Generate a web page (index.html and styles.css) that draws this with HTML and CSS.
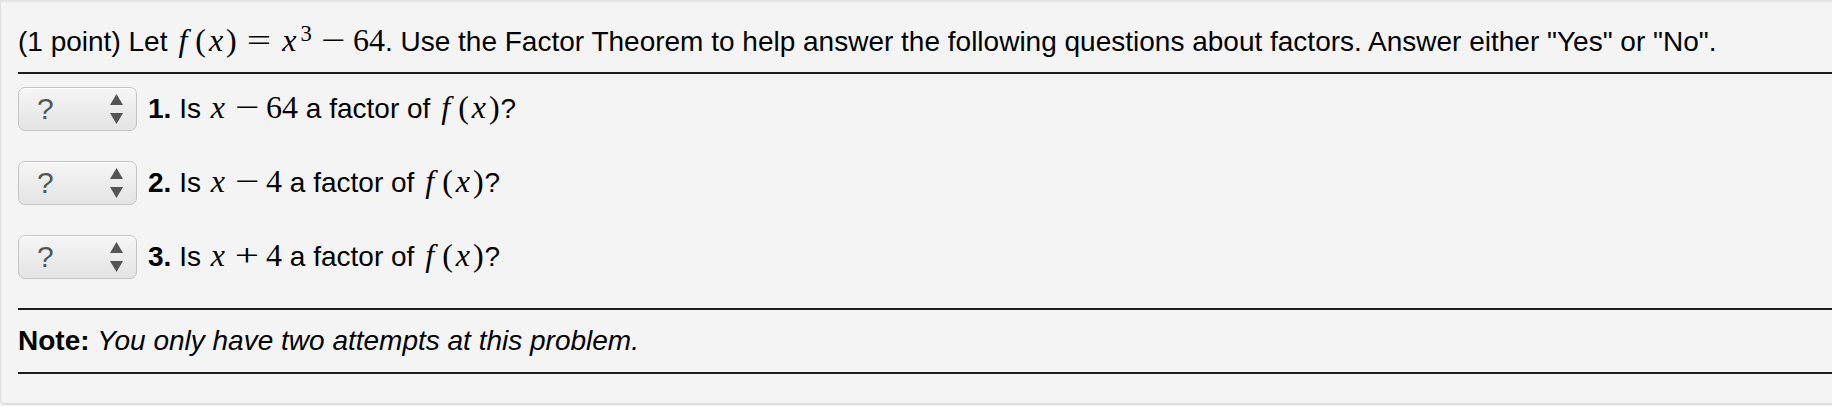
FILE: index.html
```html
<!DOCTYPE html>
<html>
<head>
<meta charset="utf-8">
<link rel="stylesheet" href="styles.css">
</head>
<body>
<div class="problem">
  <p class="intro">(1 point) Let <span class="m"><span class="mf">f</span><span class="mpar">(</span><span class="mx">x</span><span class="mpar">)</span><span class="rel"><span class="glyph">=</span></span><span class="mx">x</span><span class="sup">3</span><span class="bin"><span class="glyph">−</span></span>64</span>. Use the Factor Theorem to help answer the following questions about factors. Answer either "Yes" or "No".</p>
  <div class="rule"></div>
  <div class="questions">
    <div class="q">
      <div class="select"><span class="val">?</span><svg class="arrows" width="13" height="30" viewBox="0 0 13 30"><polygon points="6.5,0 13,11 0,11"/><polygon points="0,19 13,19 6.5,30"/></svg></div>
      <span class="qtext"><b>1.</b> Is <span class="m"><span class="mx">x</span><span class="bin"><span class="glyph">−</span></span>64</span> a factor of <span class="m"><span class="mf">f</span><span class="mpar">(</span><span class="mx">x</span><span class="mpar">)</span></span>?</span>
    </div>
    <div class="q">
      <div class="select"><span class="val">?</span><svg class="arrows" width="13" height="30" viewBox="0 0 13 30"><polygon points="6.5,0 13,11 0,11"/><polygon points="0,19 13,19 6.5,30"/></svg></div>
      <span class="qtext"><b>2.</b> Is <span class="m"><span class="mx">x</span><span class="bin"><span class="glyph">−</span></span>4</span> a factor of <span class="m"><span class="mf">f</span><span class="mpar">(</span><span class="mx">x</span><span class="mpar">)</span></span>?</span>
    </div>
    <div class="q">
      <div class="select"><span class="val">?</span><svg class="arrows" width="13" height="30" viewBox="0 0 13 30"><polygon points="6.5,0 13,11 0,11"/><polygon points="0,19 13,19 6.5,30"/></svg></div>
      <span class="qtext"><b>3.</b> Is <span class="m"><span class="mx">x</span><span class="bin"><span class="glyph">+</span></span>4</span> a factor of <span class="m"><span class="mf">f</span><span class="mpar">(</span><span class="mx">x</span><span class="mpar">)</span></span>?</span>
    </div>
  </div>
  <div class="rule rule2"></div>
  <p class="note"><b>Note:</b> <i>You only have two attempts at this problem.</i></p>
  <div class="rule rule3"></div>
</div>
</body>
</html>
```
FILE: styles.css
```css
html, body {
  margin: 0;
  padding: 0;
  background: #f4f4f4;
}
body {
  font-family: "Liberation Sans", Arial, Helvetica, sans-serif;
  color: #000;
  font-size: 28px;
}
.problem {
  box-sizing: border-box;
  height: 405px;
  background: #f4f4f4;
  border-left: 1px solid #dedede;
  border-bottom: 2px solid #dedede;
  border-bottom-left-radius: 5px;
  box-shadow: inset 0 3px 2px -1px #e2e2e2;
  padding: 0 0 0 17px;
  display: flex;
  flex-direction: column;
}
.intro {
  margin: 22px 0 0 0;
  line-height: 40px;
  white-space: nowrap;
}
.rule {
  height: 2px;
  background: #1c1c1c;
  margin-top: 10px;
}
.questions {
  display: flex;
  flex-direction: column;
  gap: 30px;
  margin-top: 13px;
}
.q {
  display: flex;
  align-items: center;
  height: 44px;
}
.select {
  box-sizing: border-box;
  width: 119px;
  height: 44px;
  border: 1px solid #c4c4c4;
  border-radius: 7px;
  background: linear-gradient(#f6f6f6, #ececec 50%, #e4e4e4);
  box-shadow: inset 0 1px 0 #ffffff;
  display: flex;
  align-items: center;
  justify-content: space-between;
  padding: 0 13px 0 18px;
  flex-shrink: 0;
}
.val {
  color: #555;
  font-size: 30px;
  line-height: 1;
}
.arrows {
  fill: #555;
  display: block;
}
.qtext {
  margin-left: 11px;
  line-height: 40px;
  white-space: nowrap;
}
.m {
  font-family: "Liberation Serif", "Times New Roman", serif;
  font-size: 32px;
  line-height: 1;
}
.mf {
  display: inline-block;
  box-sizing: border-box;
  width: 0.6em;
  padding-left: 0.1em;
  font-style: italic;
  text-align: left;
}
.mx {
  display: inline-block;
  width: 0.572em;
  font-style: italic;
  text-align: center;
}
.mpar {
  display: inline-block;
  width: 0.389em;
  text-align: center;
}
.rel, .bin {
  display: inline-block;
  width: 0.778em;
  text-align: center;
}
.rel {
  margin: 0 0.278em;
}
.bin {
  margin: 0 0.222em;
}
.glyph {
  display: inline-block;
  transform: scaleX(1.35);
}
.sup {
  display: inline-block;
  font-size: 0.707em;
  vertical-align: 0.44em;
  margin-left: 2px;
  margin-right: 2px;
}
.rule2 {
  margin-top: 29px;
}
.note {
  margin: 11px 0 0 0;
  line-height: 40px;
}
.rule3 {
  margin-top: 11px;
}
```
